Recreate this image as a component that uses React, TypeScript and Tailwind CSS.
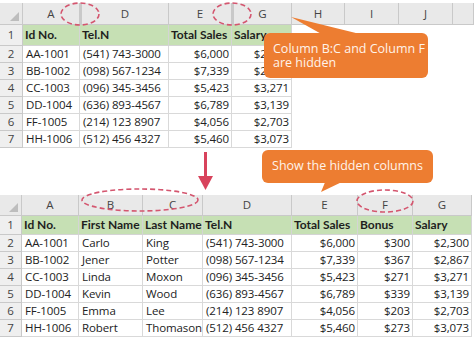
import React from "react";

const hdrCell = "flex items-center justify-center bg-[#e9e9e9] border-r border-b border-[#c9c9c9] text-[#444] text-[11.5px]";
const rowHdr = "flex items-center justify-center bg-[#efefef] border-r border-b border-[#c9c9c9] text-[#444] text-[11.5px]";
const greenCell = "flex items-center pl-[2px] bg-[#c6e0b4] border-r border-b border-[#d4d4d4] font-bold font-['Lato',_sans-serif] text-[#1e1e1e] text-[12px] whitespace-nowrap overflow-hidden";
const txtCell = "flex items-center pl-[3px] bg-white border-r border-b border-[#d9d9d9] text-[#222] text-[11.5px] tracking-[-0.1px] whitespace-nowrap overflow-hidden";
const numCell = "flex items-center justify-end pr-[2px] bg-white border-r border-b border-[#d9d9d9] text-[#222] text-[11.5px] tracking-[-0.1px] whitespace-nowrap overflow-hidden";

function Corner() {
  return (
    <div className="relative bg-[#e9e9e9] border-r border-b border-[#c9c9c9]">
      <svg className="absolute right-[3px] bottom-[3px]" width="9" height="9" viewBox="0 0 9 9">
        <polygon points="9,0 9,9 0,9" fill="#bdbdbd" />
      </svg>
    </div>
  );
}

const ids = ["AA-1001", "BB-1002", "CC-1003", "DD-1004", "FF-1005", "HH-1006"];
const first = ["Carlo", "Jener", "Linda", "Kevin", "Emma", "Robert"];
const last = ["King", "Potter", "Moxon", "Wood", "Lee", "Thomason"];
const phones = ["(541) 743-3000", "(098) 567-1234", "(096) 345-3456", "(636) 893-4567", "(214) 123 8907", "(512) 456 4327"];
const sales = ["$6,000", "$7,339", "$5,423", "$6,789", "$4,056", "$5,460"];
const bonus = ["$300", "$367", "$271", "$339", "$203", "$273"];
const salary = ["$2,300", "$2,867", "$3,271", "$3,139", "$2,703", "$3,073"];

function TopTable() {
  return (
    <div className="grid grid-cols-[23px_57px_89px_63px_60px_53px_54px_54px_1fr] grid-rows-[22px_21px_repeat(6,17px)]">
      <Corner />
      <div className={hdrCell}>A</div>
      <div className={hdrCell + " border-l-2 border-l-[#c9c9c9]"}>D</div>
      <div className={hdrCell}>E</div>
      <div className={hdrCell + " border-l-2 border-l-[#c9c9c9]"}>G</div>
      <div className={hdrCell}>H</div>
      <div className={hdrCell}>I</div>
      <div className={hdrCell}>J</div>
      <div className={hdrCell}></div>

      <div className={rowHdr}>1</div>
      <div className={greenCell}>Id No.</div>
      <div className={greenCell}>Tel.N</div>
      <div className={greenCell}>Total Sales</div>
      <div className={greenCell}>Salary</div>
      <div className="col-span-4 bg-white" />

      {ids.map((id, i) => (
        <React.Fragment key={id}>
          <div className={rowHdr}>{i + 2}</div>
          <div className={txtCell}>{id}</div>
          <div className={txtCell}>{phones[i]}</div>
          <div className={numCell}>{sales[i]}</div>
          <div className={numCell}>{salary[i]}</div>
          <div className="col-span-4 bg-white" />
        </React.Fragment>
      ))}
    </div>
  );
}

function BottomTable() {
  return (
    <div className="grid grid-cols-[22px_57px_64px_60px_89px_66px_55px_59px_1fr] grid-rows-[21px_19px_repeat(6,17px)]">
      <Corner />
      <div className={hdrCell}>A</div>
      <div className={hdrCell}>B</div>
      <div className={hdrCell}>C</div>
      <div className={hdrCell}>D</div>
      <div className={hdrCell}>E</div>
      <div className={hdrCell}>F</div>
      <div className={hdrCell}>G</div>
      <div className="bg-white" />

      <div className={rowHdr}>1</div>
      <div className={greenCell}>Id No.</div>
      <div className={greenCell}>First Name</div>
      <div className={greenCell}>Last Name</div>
      <div className={greenCell}>Tel.N</div>
      <div className={greenCell}>Total Sales</div>
      <div className={greenCell}>Bonus</div>
      <div className={greenCell}>Salary</div>
      <div className="bg-white" />

      {ids.map((id, i) => (
        <React.Fragment key={id}>
          <div className={rowHdr}>{i + 2}</div>
          <div className={txtCell}>{id}</div>
          <div className={txtCell}>{first[i]}</div>
          <div className={txtCell}>{last[i]}</div>
          <div className={txtCell}>{phones[i]}</div>
          <div className={numCell}>{sales[i]}</div>
          <div className={numCell}>{bonus[i]}</div>
          <div className={numCell}>{salary[i]}</div>
          <div className="bg-white" />
        </React.Fragment>
      ))}
    </div>
  );
}

export default function App() {
  return (
    <div className="relative w-[474px] h-[339px] bg-white overflow-hidden font-['Open_Sans',_sans-serif]">
      <div className="pt-[3px]">
        <TopTable />
      </div>
      <div className="h-[47px]" />
      <BottomTable />

      <svg className="absolute left-0 top-0 pointer-events-none" width="474" height="339" viewBox="0 0 474 339">
        <g fill="none" stroke="#d4566f" strokeWidth="1.6" strokeDasharray="5 3">
          <ellipse cx="80" cy="14" rx="19" ry="11" />
          <ellipse cx="232" cy="14" rx="19" ry="11" />
          <ellipse cx="140" cy="200" rx="58" ry="11" />
          <ellipse cx="385" cy="201" rx="28" ry="11" />
        </g>
        <rect x="204" y="152" width="3" height="26" fill="#d8435c" />
        <polygon points="198,176 213,176 205.5,190" fill="#d8435c" />
        <polygon points="291,17 325,36 368,36" fill="#ed7d31" />
        <polygon points="321,192 326,180 346,180" fill="#ed7d31" />
      </svg>

      <div className="absolute left-[264px] top-[33px] w-[164px] h-[45px] rounded-[6px] bg-[#ed7d31] text-[#fff3ea] text-[12.5px] leading-[14px] pl-[9px] pt-[9px]">
        Column B:C and Column F<br />are hidden
      </div>

      <div className="absolute left-[262px] top-[150px] w-[171px] h-[33px] rounded-[6px] bg-[#ed7d31] text-[#fff3ea] text-[12.5px] flex items-center justify-center">
        Show the hidden columns
      </div>
    </div>
  );
}
